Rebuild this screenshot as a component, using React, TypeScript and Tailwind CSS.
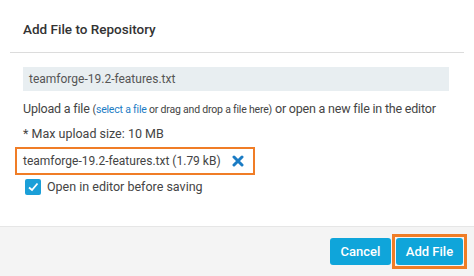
import React from 'react';

export default function App() {
  return (
    <div className="w-[474px] h-[276px] bg-white flex flex-col font-['Roboto','Noto_Sans',sans-serif] text-[#444] whitespace-nowrap">
      {/* header */}
      <div className="mx-[10px] h-[53px] border-b border-[#dcdcdc] flex items-center pl-[13px] pt-[6px]">
        <h1 className="text-[13.5px] font-medium text-[#333]">Add File to Repository</h1>
      </div>

      {/* body */}
      <div className="flex-1 px-[23px] pt-[14px]">
        <div className="w-[426px] h-[24px] bg-[#e8eef1] flex items-center pl-[6px] text-[12px] text-[#555]">
          teamforge-19.2-features.txt
        </div>
        <p className="mt-[9px] text-[12.5px] leading-[18px] text-[#444] tracking-[-0.2px]">
          Upload a file{' '}
          <span className="text-[10.5px]">
            (<span className="text-[#1b7cc4]">select a file</span> or drag and drop a file here)
          </span>{' '}
          or open a new file in the editor
        </p>
        <p className="mt-[6px] text-[12.5px] leading-[18px]">* Max upload size: 10 MB</p>
        <div className="-ml-[8px] mt-[4px] w-[240px] h-[28px] border-2 border-[#f07d26] flex items-center pl-[6px] gap-[11px]">
          <span className="text-[12px] text-[#444]">teamforge-19.2-features.txt (1.79 kB)</span>
          <svg width="12" height="12" viewBox="0 0 12 12">
            <path d="M2 2 L10 10 M10 2 L2 10" stroke="#1b7cc4" strokeWidth="3" strokeLinecap="round" />
          </svg>
        </div>
        <div className="mt-[3px] flex items-center gap-[6px] pl-[2px]">
          <span className="w-[16px] h-[16px] rounded-[2px] bg-[#1b9fd8] flex items-center justify-center">
            <svg width="12" height="12" viewBox="0 0 12 12">
              <path d="M2 6.5 L5 9 L10.5 2.5" stroke="white" strokeWidth="1.8" fill="none" />
            </svg>
          </span>
          <span className="text-[12.5px] text-[#444]">Open in editor before saving</span>
        </div>
      </div>

      {/* footer */}
      <div className="h-[50px] bg-[#f4f4f4] border-t border-[#e6e6e6] flex items-center justify-end pr-[7px] gap-[1px]">
        <button className="h-[27px] w-[61px] rounded-[3px] bg-[#0fa5da] text-white text-[13px] font-medium">Cancel</button>
        <div className="border-[3px] border-[#f07d26] p-[1px]">
          <button className="h-[27px] w-[67px] rounded-[3px] bg-[#0fa5da] text-white text-[13px] font-medium block">Add File</button>
        </div>
      </div>
    </div>
  );
}
